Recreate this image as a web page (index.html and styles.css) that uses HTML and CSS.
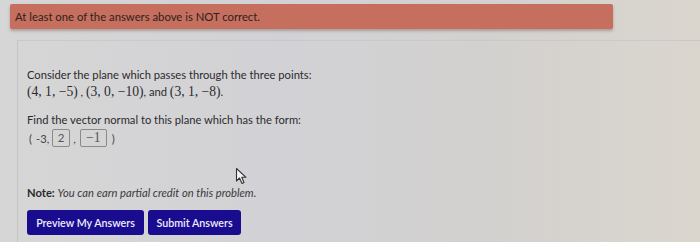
FILE: index.html
```html
<!DOCTYPE html>
<html>
<head>
<meta charset="utf-8">
<link rel="stylesheet" href="styles.css">
</head>
<body>
<div class="screen">
  <div class="alert">At least one of the answers above is NOT correct.</div>
  <div class="panel">
    <p class="para first">Consider the plane which passes through the three points:<br>
      <span class="math">(4, 1, −5)</span> , <span class="math">(3, 0, −10)</span>, and <span class="math">(3, 1, −8)</span>.</p>
    <p class="para second">Find the vector normal to this plane which has the form:<br>
      <span class="vec"><span class="paren">(</span> -3, <span class="box">2</span>,<span class="box wide"><span class="math">−1</span></span> <span class="paren">)</span></span></p>
    <svg class="cursor" width="14" height="18" viewBox="0 0 14 18"><path d="M1.5 1.5 L1.5 14 L4.5 11 L7 16.5 L9 15.5 L6.8 10.3 L11 10.3 Z" fill="#f4f4f4" stroke="#333" stroke-width="1.1" stroke-linejoin="round"/></svg>
    <p class="note"><b>Note:</b> <i>You can earn partial credit on this problem.</i></p>
    <div class="buttons">
      <button class="btn">Preview My Answers</button>
      <button class="btn">Submit Answers</button>
    </div>
  </div>
</div>
</body>
</html>
```
FILE: styles.css
```css
html, body {
  margin: 0;
  padding: 0;
}
body {
  width: 700px;
  height: 242px;
  overflow: hidden;
  font-family: Lato, "Open Sans", sans-serif;
  color: #2b2b2e;
}
.screen {
  width: 700px;
  height: 242px;
  padding-top: 4px;
  box-sizing: border-box;
  overflow: hidden;
  background: linear-gradient(90deg, #d6d6d6 0%, #d2d2d6 40%, #d3d1cf 70%, #dad6ce 100%);
}
.alert {
  margin-left: 10px;
  width: 603px;
  height: 25px;
  box-sizing: border-box;
  padding-left: 5px;
  background: #c66f5e;
  border-radius: 2px;
  box-shadow: 0 2px 3px rgba(90, 60, 50, 0.35);
  font-size: 11.3px;
  line-height: 26px;
  color: #2e2220;
}
.panel {
  position: relative;
  margin-top: 11px;
  margin-left: 17px;
  height: 202px;
  border-left: 1px solid #c4c4c4;
  border-top: 1px solid #c9c9c9;
  padding-left: 9px;
  padding-top: 25px;
  box-sizing: border-box;
}
.para {
  margin: 0;
  font-size: 11.2px;
  line-height: 17px;
}
.math {
  font-family: "Liberation Serif", "DejaVu Serif", serif;
  font-size: 13.6px;
}
.second {
  margin-top: 11px;
}
.vec {
  display: inline-flex;
  align-items: center;
  gap: 2px;
  font-size: 11.2px;
  color: #444;
  margin-top: 1px;
}
.paren {
  padding: 0 2px;
}
.box {
  display: inline-block;
  width: 16px;
  height: 16px;
  border: 1px solid #8a8a8a;
  border-radius: 2px;
  text-align: center;
  line-height: 16px;
  font-size: 11.5px;
  color: #555;
  margin: 0 1px;
}
.box.wide {
  width: 25px;
  margin-left: 2px;
}
.cursor {
  position: absolute;
  left: 217px;
  top: 126px;
}
.note {
  margin: 39px 0 0 0;
  font-size: 11.2px;
  line-height: 14px;
}
.note b {
  color: #2a2a2a;
}
.note i {
  color: #3a3a3a;
}
.buttons {
  display: flex;
  gap: 4px;
  margin-top: 10px;
}
.btn {
  height: 25px;
  padding: 0;
  border: none;
  border-radius: 3px;
  background: #1a0c8e;
  color: #eef;
  font-family: Lato, "Open Sans", sans-serif;
  font-size: 10.7px;
  font-weight: 600;
  white-space: nowrap;
}
.btn:first-child {
  width: 117px;
}
.btn:last-child {
  width: 93px;
}
```
